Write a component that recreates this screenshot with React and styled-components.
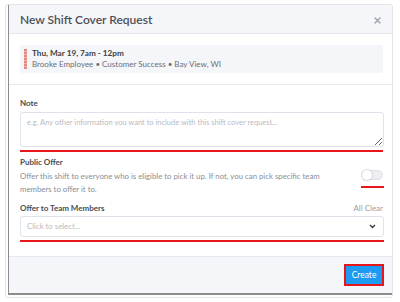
import React from "react";
import styled, { createGlobalStyle } from "styled-components";

const GlobalStyle = createGlobalStyle`
  html, body {
    margin: 0;
    padding: 0;
    background: #ffffff;
    font-family: "Lato", "Open Sans", "Liberation Sans", sans-serif;
  }
`;

/* outer frame of the screenshot */
const Frame = styled.div`
  box-sizing: border-box;
  width: 388px;
  height: 294px;
  margin: 4px 0 0 5px;
  padding: 0 1px 2px 2px;
  border: 1px solid #e4e5e8;
  border-radius: 3px;
  display: flex;
`;

const Modal = styled.div`
  flex: 1;
  display: flex;
  flex-direction: column;
  background: #fff;
  border-left: 1px solid #8c8c8c;
  border-bottom: 2px solid #8c8c8c;
`;

const Header = styled.div`
  height: 28px;
  display: flex;
  align-items: center;
  justify-content: space-between;
  padding: 0 11px 0 11px;
  background: #f5f6fa;
  border-bottom: 1px solid #e6e8ee;
`;

const Title = styled.div`
  font-size: 12px;
  font-weight: 600;
  color: #4d4f55;
`;

const Close = styled.svg`
  display: block;
  margin-top: 2px;
`;

const Section = styled.div`
  padding: ${(p) => p.pad};
  border-bottom: ${(p) => (p.divider ? "1px solid #e9eaef" : "none")};
`;

const ShiftCard = styled.div`
  height: 28px;
  display: flex;
  align-items: center;
  gap: 5px;
  padding-left: 4px;
  background: #f5f6fa;
  border-radius: 2px;
`;

const ShiftBar = styled.div`
  width: 3px;
  height: 20px;
  background: repeating-linear-gradient(#e58a80 0 2px, #f0b3aa 2px 3px);
`;

const ShiftText = styled.div`
  display: flex;
  flex-direction: column;
`;

const ShiftTime = styled.div`
  font-size: 8.2px;
  font-weight: 700;
  color: #3c3e44;
  line-height: 11px;
`;

const ShiftMeta = styled.div`
  font-size: 8px;
  color: #6b6e75;
  line-height: 11px;
`;

const LabelRow = styled.div`
  display: flex;
  justify-content: space-between;
  align-items: center;
  margin-top: ${(p) => p.top}px;
`;

const Label = styled.div`
  font-size: 8px;
  font-weight: 700;
  color: #4a4c52;
  line-height: 12px;
`;

const Clear = styled.span`
  font-size: 8px;
  color: #9a9da4;
  margin-right: 1px;
`;

const NoteBox = styled.textarea`
  display: block;
  box-sizing: border-box;
  width: 100%;
  height: 35px;
  margin: 3px 0 0;
  padding: 5px 6px;
  border: 1px solid #dfe2ea;
  border-radius: 3px;
  font-family: inherit;
  font-size: 7.5px;
  color: #444;
  outline: none;
  &::placeholder {
    color: #b8bbc2;
  }
`;

const Marker = styled.div`
  height: 2px;
  background: #e8161b;
  margin: ${(p) => p.m};
  width: ${(p) => p.w};
`;

const OfferRow = styled.div`
  display: flex;
  justify-content: space-between;
  align-items: flex-start;
`;

const Help = styled.div`
  width: 320px;
  font-size: 7.8px;
  color: #8b8e95;
  line-height: 13px;
  margin-top: 1.5px;
`;

const ToggleWrap = styled.div`
  display: flex;
  flex-direction: column;
  align-items: flex-end;
  gap: 6px;
  padding-top: 2px;
`;

const Toggle = styled.div`
  box-sizing: border-box;
  width: 21px;
  height: 10px;
  margin-right: 1px;
  border-radius: 5px;
  background: #eceef2;
  border: 1px solid #dfe1e6;
  position: relative;
  &::after {
    content: "";
    position: absolute;
    left: -1px;
    top: -1px;
    width: 10px;
    height: 10px;
    border-radius: 50%;
    background: #fff;
    box-shadow: 0 0 1px 1px #d4d6dc;
  }
`;

const Select = styled.div`
  box-sizing: border-box;
  height: 21px;
  margin-top: 2px;
  display: flex;
  align-items: center;
  justify-content: space-between;
  padding: 0 7px 0 6px;
  border: 1px solid #dfe2ea;
  border-radius: 3px;
  font-size: 7.8px;
  color: #b8bbc2;
`;

const Footer = styled.div`
  flex: 1;
  display: flex;
  justify-content: flex-end;
  align-items: flex-start;
  padding: 7px 8px 0 0;
  background: #f4f6fa;
  border-top: 1px solid #e6e8ee;
`;

const CreateButton = styled.button`
  box-sizing: border-box;
  width: 40px;
  height: 22px;
  padding: 0;
  border: 2px solid #e8161b;
  background: #1d9bf3;
  color: #fff;
  font-family: inherit;
  font-size: 8.5px;
  cursor: pointer;
`;

export default function App() {
  return (
    <>
      <GlobalStyle />
      <Frame>
        <Modal>
          <Header>
            <Title>New Shift Cover Request</Title>
            <Close width="7" height="7" viewBox="0 0 7 7">
              <path
                d="M1 1l5 5M6 1L1 6"
                stroke="#a3a6ad"
                strokeWidth="1.5"
                strokeLinecap="round"
              />
            </Close>
          </Header>

          <Section pad="11px 9px 11px 11px" divider>
            <ShiftCard>
              <ShiftBar />
              <ShiftText>
                <ShiftTime>Thu, Mar 19, 7am - 12pm</ShiftTime>
                <ShiftMeta>
                  Brooke Employee • Customer Success • Bay View, WI
                </ShiftMeta>
              </ShiftText>
            </ShiftCard>
          </Section>

          <Section pad="0 8px 14px 11px">
            <LabelRow top={12}>
              <Label>Note</Label>
            </LabelRow>
            <NoteBox placeholder="e.g. Any other information you want to include with this shift cover request..." />
            <Marker m="3px 0 0 0" w="363px" />

            <LabelRow top={4}>
              <Label>Public Offer</Label>
            </LabelRow>
            <OfferRow>
              <Help>
                Offer this shift to everyone who is eligible to pick it up. If
                not, you can pick specific team members to offer it to.
              </Help>
              <ToggleWrap>
                <Toggle />
                <Marker m="0" w="23px" />
              </ToggleWrap>
            </OfferRow>

            <LabelRow top={6}>
              <Label>Offer to Team Members</Label>
              <Clear>All Clear</Clear>
            </LabelRow>
            <Select>
              <span>Click to select...</span>
              <svg width="7" height="5" viewBox="0 0 7 5">
                <path
                  d="M1 1l2.5 2.5L6 1"
                  fill="none"
                  stroke="#3d4046"
                  strokeWidth="1.4"
                />
              </svg>
            </Select>
            <Marker m="3px 0 0 0" w="364px" />
          </Section>

          <Footer>
            <CreateButton>Create</CreateButton>
          </Footer>
        </Modal>
      </Frame>
    </>
  );
}
